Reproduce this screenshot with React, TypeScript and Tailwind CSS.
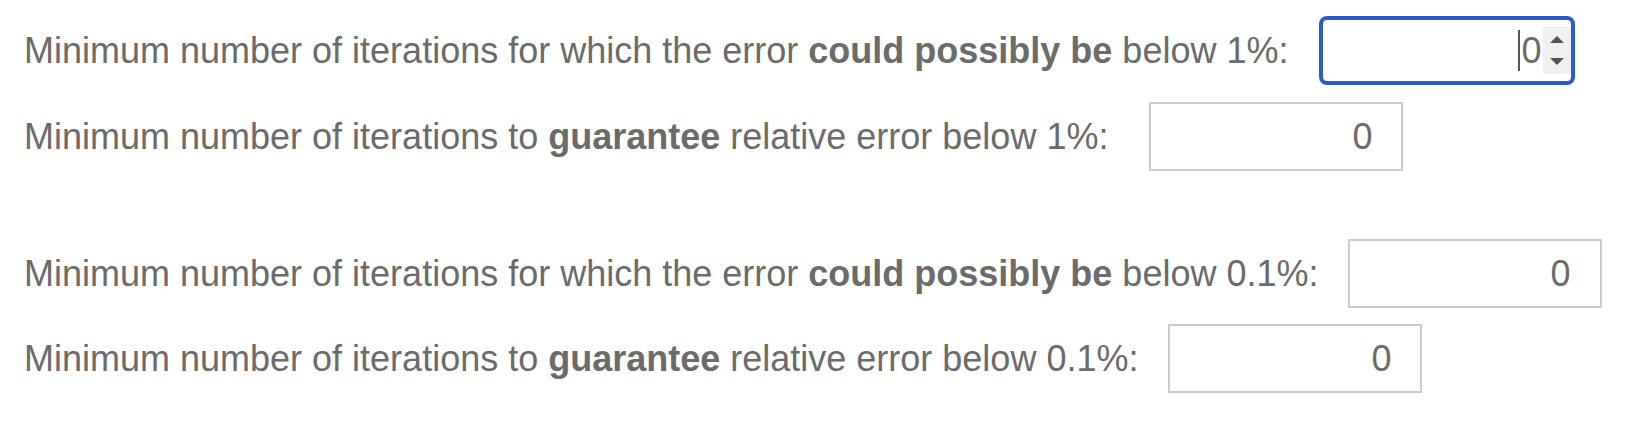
import React from 'react';

interface Row {
  kind: 'possible' | 'guarantee';
  pct: string;
  gap: string;
  focused?: boolean;
}

const rows: Row[] = [
  { kind: 'possible', pct: '1%', gap: 'ml-[31px]', focused: true },
  { kind: 'guarantee', pct: '1%', gap: 'ml-[41px]' },
  { kind: 'possible', pct: '0.1%', gap: 'ml-[29px]' },
  { kind: 'guarantee', pct: '0.1%', gap: 'ml-[30px]' },
];

function Label({ row }: { row: Row }) {
  if (row.kind === 'possible') {
    return (
      <span className="whitespace-pre">
        Minimum number of iterations for which the error <b className="font-bold">could possibly be</b> below {row.pct}:
      </span>
    );
  }
  return (
    <span className="whitespace-pre">
      Minimum number of iterations to <b className="font-bold">guarantee</b> relative error below {row.pct}:
    </span>
  );
}

function NumberBox({ focused }: { focused?: boolean }) {
  if (focused) {
    return (
      <div className="w-[256px] h-[69px] border-[4px] border-[#2a5bc6] rounded-[8px] bg-white flex items-center justify-end">
        <span className="w-[2px] h-[41px] bg-[#555]" />
        <span className="ml-[1px] leading-none">0</span>
        <div className="ml-[2px] w-[28px] h-[47px] bg-[#f0f0f0] flex flex-col items-center justify-center gap-[15px]">
          <svg width="14" height="7" viewBox="0 0 14 7"><path d="M0 7 L7 0 L14 7 Z" fill="#555" /></svg>
          <svg width="14" height="7" viewBox="0 0 14 7"><path d="M0 0 L7 7 L14 0 Z" fill="#555" /></svg>
        </div>
      </div>
    );
  }
  return (
    <div className="w-[254px] h-[69px] border-2 border-[#cccccc] bg-white flex items-center justify-end pr-[29px]">
      <span className="leading-none">0</span>
    </div>
  );
}

export default function App() {
  return (
    <div
      className="w-[1634px] h-[428px] bg-white pl-[24px] pt-[16px] text-[36px] text-[#6b6b6b]"
      style={{ fontFamily: '"Liberation Sans", Arial, Helvetica, sans-serif' }}
    >
      <div className="flex flex-col">
        {rows.map((row, i) => (
          <div
            key={i}
            className={`flex items-center ${i === 1 ? 'mt-[17px]' : i === 2 ? 'mt-[68px]' : i === 3 ? 'mt-[16px]' : ''}`}
          >
            <Label row={row} />
            <div className={row.gap}>
              <NumberBox focused={row.focused} />
            </div>
          </div>
        ))}
      </div>
    </div>
  );
}
